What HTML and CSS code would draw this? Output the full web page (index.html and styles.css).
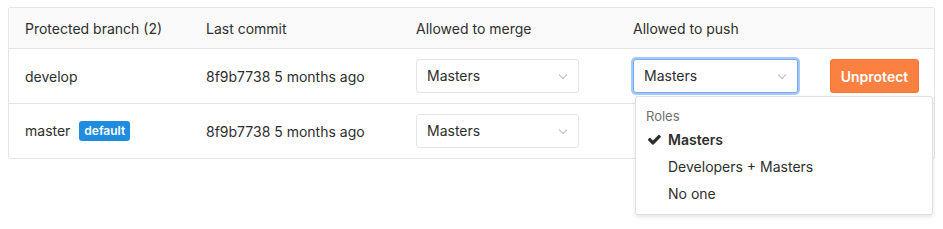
FILE: index.html
```html
<!DOCTYPE html>
<html lang="en">
<head>
  <meta charset="UTF-8" />
  <title>Protected branches</title>
  <link rel="stylesheet" href="styles.css">
</head>
<body>
  <div class="branches">
    <div class="row head">
      <div>Protected branch (2)</div>
      <div>Last commit</div>
      <div>Allowed to merge</div>
      <div>Allowed to push</div>
      <div></div>
    </div>

    <div class="row">
      <div>develop</div>
      <div>8f9b7738 5 months ago</div>
      <div><div class="select">Masters<span class="caret"></span></div></div>
      <div class="push-cell">
        <div class="select focused">Masters<span class="caret"></span></div>
        <div class="menu">
          <div class="menu-header">Roles</div>
          <div class="menu-item active">
            <svg class="check" viewBox="130 250 1550 1290" width="13" height="11"><path d="M1671 566q0 40-28 68l-724 724-136 136q-28 28-68 28t-68-28l-136-136-362-362q-28-28-28-68t28-68l136-136q28-28 68-28t68 28l294 295 656-657q28-28 68-28t68 28l136 136q28 28 28 68z" fill="#2e2e2e"/></svg>
            Masters
          </div>
          <div class="menu-item">Developers + Masters</div>
          <div class="menu-item">No one</div>
        </div>
      </div>
      <div><button class="btn-unprotect">Unprotect</button></div>
    </div>

    <div class="row">
      <div>master <span class="badge">default</span></div>
      <div>8f9b7738 5 months ago</div>
      <div><div class="select">Masters<span class="caret"></span></div></div>
      <div></div>
      <div></div>
    </div>
  </div>
</body>
</html>
```

FILE: styles.css
```css
html, body { overflow: visible; }
body { margin: 7px 8px; min-height: 214px; font-family: Inter, "Liberation Sans", sans-serif; font-size: 14px; color: #2e2e2e; background: #fff; }

.branches { border: 1px solid #e5e5e5; border-radius: 2px; width: 925px; }
.row {
  display: grid;
  grid-template-columns: 181px 210px 217px 197px auto;
  align-items: center;
  padding: 0 16px;
  height: 54px;
  border-top: 1px solid #e5e5e5;
}
.row.head { border-top: 0; height: 40px; background: #fafafa; }

.push-cell { position: relative; }

.select {
  position: relative;
  width: 163px;
  height: 34px;
  box-sizing: border-box;
  border: 1px solid #e5e5e5;
  border-radius: 3px;
  padding: 0 10px;
  line-height: 32px;
  background: #fff;
}
.select.focused { width: 165px; border-color: #73a9f5; box-shadow: 0 0 0 2px #a8c9f8; }
.caret {
  position: absolute;
  right: 12px;
  top: 12px;
  width: 5px;
  height: 5px;
  border-right: 1.5px solid #bbb;
  border-bottom: 1.5px solid #bbb;
  transform: rotate(45deg);
}

.btn-unprotect {
  font: inherit;
  font-weight: 600;
  color: #fff;
  background: #fc8040;
  border: 1px solid #f27632;
  border-radius: 3px;
  width: 89px;
  height: 34px;
  padding: 0;
}

.badge {
  display: inline-block;
  margin-left: 5px;
  padding: 0 5px;
  height: 20px;
  line-height: 20px;
  font-size: 12px;
  font-weight: 600;
  color: #fff;
  background: #1f8ce0;
  border-radius: 3px;
  vertical-align: 1px;
}

.menu {
  position: absolute;
  left: 2px;
  top: 37px;
  width: 298px;
  box-sizing: border-box;
  padding: 9px 0 7px;
  background: #fff;
  border: 1px solid #e0e0e0;
  border-radius: 3px;
  box-shadow: 0 2px 4px rgba(0,0,0,0.1);
  z-index: 2;
}
.menu-header { padding: 0 10px; font-size: 13px; color: #707070; line-height: 20px; }
.menu-item { position: relative; padding: 0 32px; line-height: 27px; }
.menu-item.active { font-weight: 600; }
.check { position: absolute; left: 12px; top: 8px; }
```
